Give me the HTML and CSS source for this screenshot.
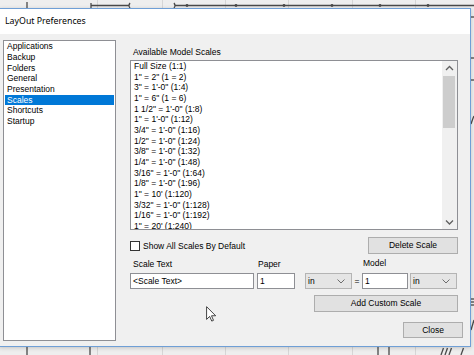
FILE: index.html
```html
<!DOCTYPE html>
<html>
<head>
<meta charset="utf-8">
<title>LayOut Preferences</title>
<link rel="stylesheet" href="styles.css">
</head>
<body>
<svg class="backdrop" width="474" height="355" viewBox="0 0 474 355">
  <g stroke="#d6d6d6" stroke-width="1">
    <line x1="97.5" y1="0" x2="97.5" y2="355"/>
    <line x1="162.5" y1="0" x2="162.5" y2="355"/>
    <line x1="225.5" y1="0" x2="225.5" y2="355"/>
    <line x1="288.5" y1="0" x2="288.5" y2="355"/>
    <line x1="352.5" y1="0" x2="352.5" y2="355"/>
    <line x1="415.5" y1="0" x2="415.5" y2="355"/>
  </g>
  <g stroke="#4a4a4a" stroke-width="1.3" fill="none">
    <line x1="27" y1="2" x2="27" y2="8"/>
    <line x1="91" y1="5.5" x2="129" y2="5.5"/>
    <line x1="91" y1="3" x2="91" y2="8"/>
    <path d="M130 3 q-2 2.5 0 5"/>
    <path d="M174 3 q2 2.5 0 5"/>
    <line x1="175" y1="5.5" x2="474" y2="5.5"/>
    <line x1="27" y1="347" x2="27" y2="355"/>
    <line x1="90" y1="347" x2="90" y2="355"/>
    <line x1="378" y1="347" x2="378" y2="355"/>
    <line x1="389" y1="347" x2="389" y2="355"/>
    <line x1="441" y1="355" x2="443.5" y2="348"/>
    <line x1="445" y1="355" x2="447.5" y2="348"/>
    <line x1="449" y1="355" x2="451.5" y2="348"/>
    <line x1="461" y1="355" x2="463.5" y2="348"/>
    <line x1="471" y1="17" x2="474" y2="17"/>
    <line x1="471" y1="58" x2="474" y2="58"/>
    <line x1="471" y1="80" x2="474" y2="80"/>
    <path d="M471 124 q2 -6 3 -8"/>
    <line x1="471" y1="299" x2="474" y2="299"/>
    <line x1="471" y1="302" x2="474" y2="302"/>
    <line x1="471" y1="305" x2="474" y2="305"/>
    <path d="M471 330 l3 -10"/>
  </g>
  <g fill="#4a4a4a">
    <circle cx="187" cy="5.5" r="1.4"/>
    <circle cx="236" cy="5.5" r="1.4"/>
    <circle cx="284" cy="5.5" r="1.4"/>
    <circle cx="332" cy="5.5" r="1.4"/>
    <circle cx="380" cy="5.5" r="1.4"/>
    <circle cx="428" cy="5.5" r="1.4"/>
  </g>
</svg>

<div class="dialog">
  <div class="titlebar">LayOut Preferences</div>
  <div class="content">
    <ul class="nav">
      <li>Applications</li>
      <li>Backup</li>
      <li>Folders</li>
      <li>General</li>
      <li>Presentation</li>
      <li class="sel">Scales</li>
      <li>Shortcuts</li>
      <li>Startup</li>
    </ul>
    <div class="pane">
      <div class="main">
        <div class="caption">Available Model Scales</div>
        <div class="scalelist">
          <ul class="items">
            <li>Full Size (1:1)</li>
            <li>1" = 2" (1 = 2)</li>
            <li>3" = 1'-0" (1:4)</li>
            <li>1" = 6" (1 = 6)</li>
            <li>1 1/2" = 1'-0" (1:8)</li>
            <li>1" = 1'-0" (1:12)</li>
            <li>3/4" = 1'-0" (1:16)</li>
            <li>1/2" = 1'-0" (1:24)</li>
            <li>3/8" = 1'-0" (1:32)</li>
            <li>1/4" = 1'-0" (1:48)</li>
            <li>3/16" = 1'-0" (1:64)</li>
            <li>1/8" = 1'-0" (1:96)</li>
            <li>1" = 10' (1:120)</li>
            <li>3/32" = 1'-0" (1:128)</li>
            <li>1/16" = 1'-0" (1:192)</li>
            <li>1" = 20' (1:240)</li>
          </ul>
          <div class="scrollbar">
            <div class="arrow">
              <svg width="15" height="14" viewBox="0 0 15 14"><polyline points="4,9 7.5,5.5 11,9" fill="none" stroke="#606060" stroke-width="1.3"/></svg>
            </div>
            <div class="track"><div class="thumb"></div></div>
            <div class="arrow">
              <svg width="15" height="14" viewBox="0 0 15 14"><polyline points="4,5.5 7.5,9 11,5.5" fill="none" stroke="#606060" stroke-width="1.3"/></svg>
            </div>
          </div>
        </div>
        <div class="row-check">
          <label class="check"><span class="box"></span>Show All Scales By Default</label>
          <button class="btn btn-delete">Delete Scale</button>
        </div>
        <div class="form">
          <div class="lbl lbl-scale">Scale Text</div>
          <div class="lbl lbl-paper">Paper</div>
          <div class="lbl lbl-model">Model</div>
          <div class="field f-scale">&lt;Scale Text&gt;</div>
          <div class="field f-paper">1</div>
          <div class="combo c-paper"><span>in</span><svg width="8" height="5" viewBox="0 0 8 5"><polyline points="0.5,0.5 4,4 7.5,0.5" fill="none" stroke="#6d6d6d" stroke-width="1"/></svg></div>
          <div class="eq">=</div>
          <div class="field f-model">1</div>
          <div class="combo c-model"><span>in</span><svg width="8" height="5" viewBox="0 0 8 5"><polyline points="0.5,0.5 4,4 7.5,0.5" fill="none" stroke="#6d6d6d" stroke-width="1"/></svg></div>
        </div>
        <div class="row-add">
          <button class="btn btn-add">Add Custom Scale</button>
        </div>
      </div>
      <div class="footer">
        <button class="btn btn-close">Close</button>
      </div>
    </div>
  </div>
</div>

<svg class="cursor" width="10" height="16" viewBox="0 0 12 19">
  <path d="M0.7 0.7 V16 L4.4 12.4 L6.9 18 L9 17.1 L6.6 11.6 H11.6 Z" fill="#fff" stroke="#222" stroke-width="1" stroke-linejoin="round"/>
</svg>
</body>
</html>
```

FILE: styles.css
```css
* { box-sizing: border-box; }

html, body {
  margin: 0;
  padding: 0;
}

body {
  width: 474px;
  height: 355px;
  overflow: hidden;
  background: #eeeeee;
  font-family: "Liberation Sans", Arial, sans-serif;
  font-size: 8.5px;
  color: #000;
  position: relative;
}

.backdrop {
  position: absolute;
  left: 0;
  top: 0;
}

.dialog {
  position: absolute;
  left: -1px;
  top: 8px;
  width: 472px;
  height: 339px;
  border: 1px solid #6f9fd6;
  background: #f0f0f0;
  box-shadow: 0 1px 4px rgba(0, 0, 0, 0.18);
  display: flex;
  flex-direction: column;
}

.titlebar {
  height: 25px;
  line-height: 24px;
  padding-left: 5px;
  background: #ffffff;
  font-family: "Noto Sans", "Liberation Sans", sans-serif;
  font-size: 8.8px;
  color: #000;
}

.content {
  flex: 1;
  display: flex;
  padding-top: 6px;
}

.nav {
  list-style: none;
  margin: 0 0 0 3px;
  padding: 0.3px 1px 0;
  width: 113px;
  height: 301px;
  background: #fff;
  border: 1px solid #8e8f94;
}

.nav li {
  height: 10.67px;
  line-height: 10.67px;
  padding-left: 2px;
  white-space: nowrap;
}

.nav li.sel {
  background: #0078d7;
  color: #fff;
}

.pane {
  flex: 1;
  margin-left: 14px;
  display: flex;
  flex-direction: column;
}

.main {
  padding-right: 12px;
  display: flex;
  flex-direction: column;
}

.caption {
  padding: 7px 0 0 3px;
  line-height: 11px;
  height: 18px;
}

.scalelist {
  margin-top: 2px;
  height: 170px;
  background: #fff;
  border: 1px solid #8e8f94;
  display: flex;
  overflow: hidden;
}

.items {
  flex: 1;
  list-style: none;
  margin: 0;
  padding: 0 0 0 1px;
  overflow: hidden;
}

.items li {
  height: 10.67px;
  line-height: 10.67px;
  padding-left: 2px;
  white-space: nowrap;
}

.scrollbar {
  width: 15px;
  background: #f0f0f0;
  display: flex;
  flex-direction: column;
}

.arrow {
  height: 14px;
  display: flex;
}

.track {
  flex: 1;
  padding: 1px 2px 0 1px;
}

.thumb {
  height: 52px;
  background: #cdcdcd;
}

.row-check {
  margin-top: 7px;
  height: 17px;
  display: flex;
  align-items: center;
  justify-content: space-between;
}

.check {
  display: flex;
  align-items: center;
  gap: 3px;
}

.box {
  width: 10px;
  height: 10px;
  border: 1px solid #333;
  background: #fff;
}

.btn {
  font-family: "Liberation Sans", Arial, sans-serif;
  font-size: 8.5px;
  color: #000;
  background: #e1e1e1;
  border: 1px solid #adadad;
  padding: 0;
  margin: 0;
  line-height: 1;
}

.btn-delete {
  width: 90px;
  height: 17px;
}

.form {
  margin-top: 5px;
  display: grid;
  grid-template-columns: 124px 3px 38px 10px 47px 10px 46px 2px 47px;
  grid-template-rows: 11px 16px;
  row-gap: 3px;
}

.lbl {
  line-height: 11px;
  white-space: nowrap;
}

.lbl-scale { grid-column: 1; grid-row: 1; padding-left: 3px; }
.lbl-paper { grid-column: 3 / span 2; grid-row: 1; padding-left: 1px; }
.lbl-model { grid-column: 7 / span 2; grid-row: 1; padding-left: 1px; margin-top: -1.5px; }

.field {
  grid-row: 2;
  background: #fff;
  border: 1px solid #8e8f94;
  line-height: 14px;
  padding-left: 2px;
  white-space: nowrap;
}

.f-scale { grid-column: 1; }
.f-paper { grid-column: 3; }
.f-model { grid-column: 7; }

.combo {
  grid-row: 2;
  background: #e5e5e5;
  border: 1px solid #b4b4b4;
  display: flex;
  align-items: center;
  justify-content: space-between;
  padding: 0 6px 0 2px;
}

.c-paper { grid-column: 5; }
.c-model { grid-column: 9; }

.eq {
  grid-column: 6;
  grid-row: 2;
  text-align: center;
  line-height: 16px;
}

.row-add {
  margin-top: 6px;
  display: flex;
  justify-content: flex-end;
}

.btn-add {
  width: 144px;
  height: 17px;
}

.footer {
  margin-top: 10px;
  padding-right: 7px;
  display: flex;
  justify-content: flex-end;
}

.btn-close {
  width: 60px;
  height: 16px;
}

.cursor {
  position: absolute;
  left: 206px;
  top: 306px;
}
```
